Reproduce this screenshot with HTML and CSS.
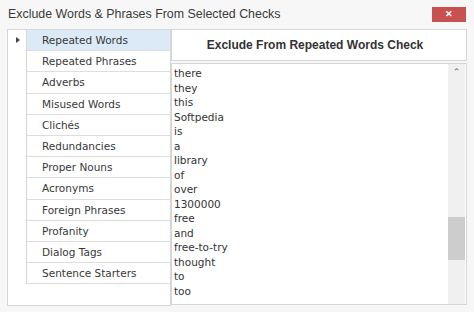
FILE: index.html
```html
<!DOCTYPE html>
<html lang="en">
<head>
  <meta charset="UTF-8">
  <title>Exclude Words &amp; Phrases From Selected Checks</title>
  <link rel="stylesheet" href="styles.css">
</head>
<body>
  <div class="window">
    <header class="titlebar">
      <span class="title">Exclude Words &amp; Phrases From Selected Checks</span>
      <button class="close">&#x2715;</button>
    </header>
    <div class="content">
      <div class="grid">
        <div class="marker"><span class="arrow"></span></div>
        <ul class="checks">
          <li class="selected">Repeated Words</li>
          <li>Repeated Phrases</li>
          <li>Adverbs</li>
          <li>Misused Words</li>
          <li>Clichés</li>
          <li>Redundancies</li>
          <li>Proper Nouns</li>
          <li>Acronyms</li>
          <li>Foreign Phrases</li>
          <li>Profanity</li>
          <li>Dialog Tags</li>
          <li>Sentence Starters</li>
        </ul>
      </div>
      <div class="side">
        <div class="side-head">Exclude From Repeated Words Check</div>
        <div class="words">
          <div class="word-list">
            <div>there</div>
            <div>they</div>
            <div>this</div>
            <div>Softpedia</div>
            <div>is</div>
            <div>a</div>
            <div>library</div>
            <div>of</div>
            <div>over</div>
            <div>1300000</div>
            <div>free</div>
            <div>and</div>
            <div>free-to-try</div>
            <div>thought</div>
            <div>to</div>
            <div>too</div>
          </div>
          <div class="scrollbar">
            <div class="scroll-up">&#x2303;</div>
            <div class="thumb"></div>
          </div>
        </div>
      </div>
    </div>
  </div>
</body>
</html>
```

FILE: styles.css
```css
body {
  margin: 0;
  padding: 0;
  background-color: #f7f7f7;
  font-family: 'DejaVu Sans', sans-serif;
  font-size: 10.5px;
  color: #333;
}
.window {
  width: 474px;
  height: 312px;
  overflow: hidden;
}
.titlebar {
  display: flex;
  align-items: flex-start;
  height: 29px;
  padding-left: 8px;
  box-sizing: border-box;
}
.title {
  font-family: 'Liberation Sans', sans-serif;
  font-size: 12.4px;
  color: #3a3a3a;
  margin-top: 7px;
}
.close {
  margin-left: auto;
  margin-right: 8px;
  margin-top: 7px;
  width: 34px;
  height: 15px;
  border: none;
  padding: 0;
  background-color: #c75050;
  color: #fff;
  font-size: 9px;
  font-weight: bold;
  line-height: 15px;
}
.content {
  display: flex;
  padding-left: 7px;
}
.grid {
  display: flex;
  width: 164px;
  height: 277px;
  box-sizing: border-box;
  border: 1px solid #d6d6d6;
  background-color: #fff;
}
.marker {
  width: 18px;
  padding-top: 7px;
  box-sizing: border-box;
  display: flex;
  justify-content: center;
}
.arrow {
  width: 0;
  height: 0;
  margin-left: 1px;
  border-top: 3.5px solid transparent;
  border-bottom: 3.5px solid transparent;
  border-left: 4px solid #444;
}
.checks {
  list-style: none;
  margin: 0;
  padding: 0;
  flex: 1;
  align-self: flex-start;
  border-left: 1px solid #d6d6d6;
}
.checks li {
  height: 21.2px;
  box-sizing: border-box;
  border-bottom: 1px solid #dedede;
  padding-left: 15px;
  line-height: 20px;
  color: #383838;
}
.checks li.selected {
  background-color: #dce9f6;
}
.side {
  width: 296px;
  display: flex;
  flex-direction: column;
  gap: 2px;
}
.side-head {
  height: 32px;
  box-sizing: border-box;
  border: 1px solid #d6d6d6;
  padding-right: 8px;
  background-color: #fff;
  font-family: 'Liberation Sans', sans-serif;
  font-weight: bold;
  font-size: 12px;
  color: #333;
  display: flex;
  align-items: center;
  justify-content: center;
}
.words {
  height: 242px;
  box-sizing: border-box;
  border: 1px solid #d6d6d6;
  background-color: #fff;
  display: flex;
}
.word-list {
  flex: 1;
  padding: 2px 0 0 2px;
  line-height: 14.5px;
  color: #333;
}
.scrollbar {
  width: 17px;
  margin-right: 1px;
  background-color: #f0f0f0;
  display: flex;
  flex-direction: column;
  align-items: center;
}
.scroll-up {
  height: 17px;
  font-size: 9px;
  line-height: 17px;
  color: #606060;
}
.thumb {
  width: 17px;
  height: 43px;
  margin-top: 136px;
  background-color: #cdcdcd;
}
```
